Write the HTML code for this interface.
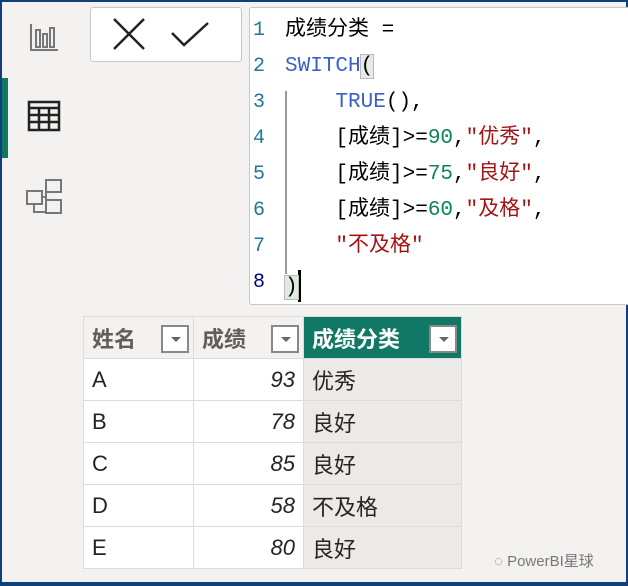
<!DOCTYPE html>
<html><head><meta charset="utf-8"><style>
body{margin:0;width:628px;height:586px;overflow:hidden;background:#0f3f7d;font-family:"Liberation Sans","Noto Sans CJK SC",sans-serif}
#f{position:absolute;left:2px;top:2px;width:624px;height:580px;background:#f3f2f1}
.abs{position:absolute}
.code{left:249px;top:7px;width:382px;height:296px;background:#fff;border:1px solid #c8c8c8;border-radius:3px;font-family:"Liberation Mono","Noto Sans CJK SC",monospace;font-size:21px}
.ln,.cl{position:absolute;height:26px;line-height:26px}
.ln{left:3px;color:#237893;font-size:20px}
.cl{left:35px;white-space:pre;color:#000}
.kw{color:#3b5fc8}.n{color:#098658}.s{color:#a31515}
table{border-collapse:collapse;font-size:22px;table-layout:fixed;width:378px}
td{height:42px;border:1px solid #dcdcdc;padding:0 8px;box-sizing:border-box;background:#fff;color:#252423}
th{height:42px;border:1px solid #dcdcdc;background:#f3f2f1;color:#605e5c;font-size:22px;text-align:left;padding:0 8px;position:relative;box-sizing:border-box}
.dd{position:absolute;right:4px;top:8px;width:28px;height:28px;border:2px solid #8a8886;box-sizing:border-box;background:#fff}
.dd:after{content:"";position:absolute;left:8px;top:10px;border:5px solid transparent;border-top:5px solid #666}
</style></head><body><div id="f"></div>
<div class="abs" style="left:2px;top:78px;width:6px;height:80px;background:#117865"></div>
<svg class="abs" style="left:28px;top:22px" width="32" height="32"><g fill="none" stroke="#777" stroke-width="2"><path d="M3 2V28H30"/><rect x="8" y="8" width="4" height="17"/><rect x="15" y="12" width="4" height="13"/><rect x="22" y="6" width="4" height="19"/></g></svg>
<svg class="abs" style="left:27px;top:100px" width="34" height="32"><g fill="none" stroke="#222" stroke-width="2.5"><rect x="2" y="2" width="30" height="28"/><path d="M2 8H32M2 15H32M2 22H32M12 8V30M22 8V30"/></g></svg>
<svg class="abs" style="left:25px;top:178px" width="38" height="38"><g fill="none" stroke="#777" stroke-width="2"><rect x="21" y="2" width="15" height="12"/><rect x="2" y="13" width="15" height="13"/><rect x="21" y="22" width="15" height="13"/><path d="M9 26V34H21M17 19H21V14M21 19V22"/></g></svg>
<div class="abs" style="left:90px;top:7px;width:150px;height:53px;background:#fff;border:1px solid #c8c8c8;border-radius:3px"></div>
<svg class="abs" style="left:110px;top:15px" width="110" height="40"><g fill="none" stroke="#222" stroke-width="2.5"><path d="M4 4L34 34M34 4L4 34"/><path d="M62 18L74 30L98 8"/></g></svg>
<div class="abs code">
<div class="ln" style="top:10px">1</div><div class="cl" style="top:10px">成绩分类 =</div>
<div class="ln" style="top:46px">2</div><div class="cl kw" style="top:46px">SWITCH<span style="background:#e8e8e8;outline:1px solid #bbb;color:#000">(</span></div>
<div class="abs" style="left:35px;top:83px;width:2px;height:183px;background:#999"></div>
<div class="ln" style="top:82px">3</div><div class="cl" style="top:82px">    <span class="kw">TRUE</span>(),</div>
<div class="ln" style="top:118px">4</div><div class="cl" style="top:118px">    [成绩]&gt;=<span class="n">90</span>,<span class="s">"优秀"</span>,</div>
<div class="ln" style="top:154px">5</div><div class="cl" style="top:154px">    [成绩]&gt;=<span class="n">75</span>,<span class="s">"良好"</span>,</div>
<div class="ln" style="top:190px">6</div><div class="cl" style="top:190px">    [成绩]&gt;=<span class="n">60</span>,<span class="s">"及格"</span>,</div>
<div class="ln" style="top:226px">7</div><div class="cl" style="top:226px">    <span class="s">"不及格"</span></div>
<div class="ln" style="top:262px;color:#000080">8</div><div class="cl" style="top:262px"><span style="background:#e0ebe0;outline:1px solid #bbb">)</span><span style="display:inline-block;width:3px;height:32px;background:#000;vertical-align:middle"></span></div>
</div>
<table class="abs" style="left:83px;top:316px">
<colgroup><col style="width:110px"><col style="width:110px"><col style="width:158px"></colgroup>
<tr><th>姓名<span class="dd"></span></th><th>成绩<span class="dd"></span></th><th style="background:#117865;color:#fff">成绩分类<span class="dd"></span></th></tr>
<tr><td>A</td><td style="text-align:right;font-style:italic">93</td><td style="background:#ebeae9">优秀</td></tr>
<tr><td>B</td><td style="text-align:right;font-style:italic">78</td><td style="background:#ebeae9">良好</td></tr>
<tr><td>C</td><td style="text-align:right;font-style:italic">85</td><td style="background:#ebeae9">良好</td></tr>
<tr><td>D</td><td style="text-align:right;font-style:italic">58</td><td style="background:#ebeae9">不及格</td></tr>
<tr><td>E</td><td style="text-align:right;font-style:italic">80</td><td style="background:#ebeae9">良好</td></tr>
</table>
<div class="abs" style="left:494px;top:550px;font-size:15px;color:#777">◌ PowerBI星球</div>
</body></html>
